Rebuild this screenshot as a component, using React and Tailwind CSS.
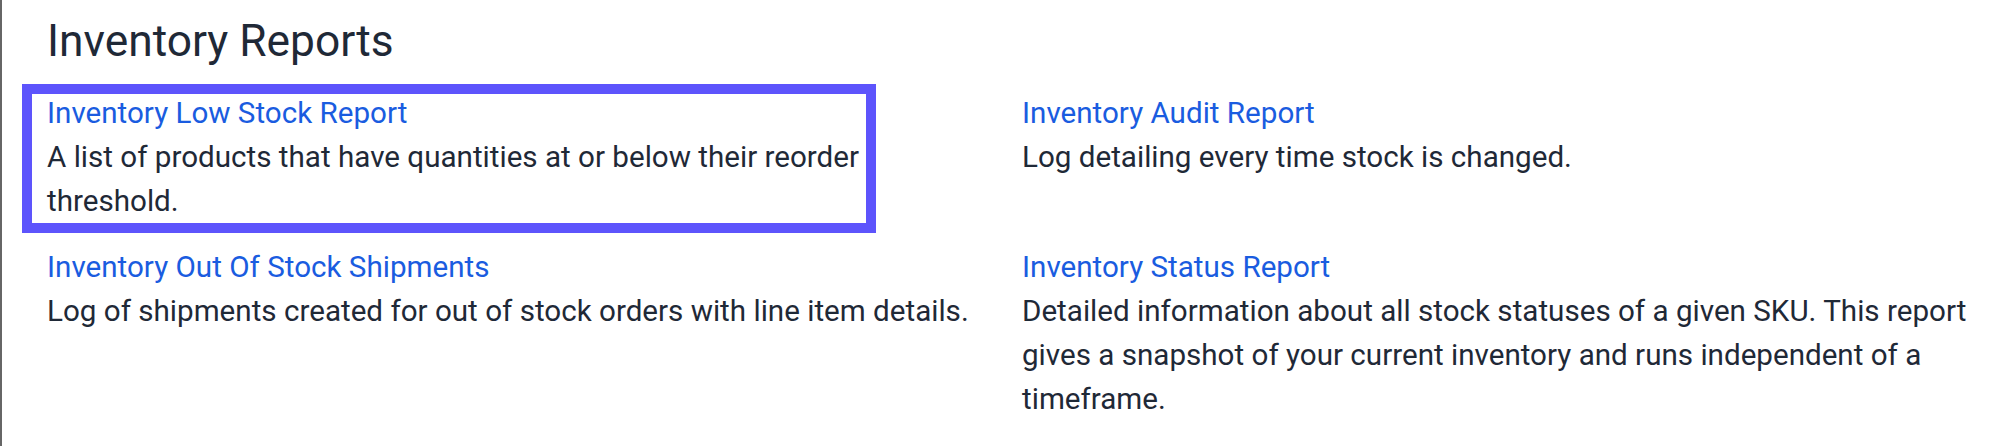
import React from 'react';

const reports = [
  {
    title: 'Inventory Low Stock Report',
    text: 'A list of products that have quantities at or below their reorder threshold.',
    highlight: true,
  },
  {
    title: 'Inventory Audit Report',
    text: 'Log detailing every time stock is changed.',
  },
  {
    title: 'Inventory Out Of Stock Shipments',
    text: 'Log of shipments created for out of stock orders with line item details.',
  },
  {
    title: 'Inventory Status Report',
    text: 'Detailed information about all stock statuses of a given SKU. This report gives a snapshot of your current inventory and runs independent of a timeframe.',
  },
];

function ReportItem({ title, text, highlight }) {
  return (
    <div className="relative px-[15px]">
      {/* highlight frame drawn over the first item */}
      {highlight && (
        <div className="pointer-events-none absolute left-[-10px] top-[-7px] w-[854px] h-[149px] border-[10px] border-[#5d54fc]" />
      )}
      <div className={highlight ? 'w-[820px]' : ''}>
        <a href="#" className="block text-[29.6px] leading-[44px] text-[#1a5ce0]">
          {title}
        </a>
        <p className="text-[29.6px] leading-[44px] text-[#1f2937]">{text}</p>
      </div>
    </div>
  );
}

export default function App() {
  return (
    <div className="min-h-[446px] bg-white border-l-2 border-[#666666] font-['Roboto','Liberation_Sans',sans-serif]">
      <div className="pl-[30px] pt-[15px]">
        <h1 className="pl-[15px] text-[44.3px] leading-[52px] text-[#1f2937]">Inventory Reports</h1>
        <div className="mt-[24px] grid grid-cols-[975px_1fr] gap-y-[22px]">
          {reports.map((r) => (
            <ReportItem key={r.title} {...r} />
          ))}
        </div>
      </div>
    </div>
  );
}
